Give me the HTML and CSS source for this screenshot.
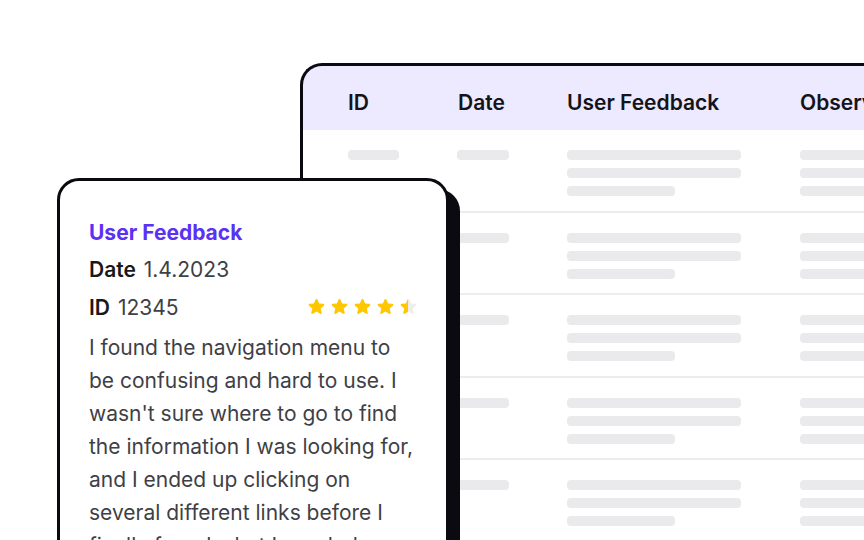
FILE: index.html
```html
<!DOCTYPE html>
<html lang="en">
<head>
<meta charset="utf-8">
<title>User Feedback</title>
<link rel="stylesheet" href="styles.css">
</head>
<body>
<div class="stage">
  <div class="table">
    <div class="thead">
      <div class="th">ID</div>
      <div class="th">Date</div>
      <div class="th">User Feedback</div>
      <div class="th">Observations</div>
    </div>
    <div class="row">
      <div class="cell"><span class="bar short"></span></div>
      <div class="cell"><span class="bar short"></span></div>
      <div class="cell"><span class="bar long"></span><span class="bar long"></span><span class="bar mid"></span></div>
      <div class="cell"><span class="bar long"></span><span class="bar long"></span><span class="bar mid"></span></div>
    </div>
    <div class="row">
      <div class="cell"><span class="bar short"></span></div>
      <div class="cell"><span class="bar short"></span></div>
      <div class="cell"><span class="bar long"></span><span class="bar long"></span><span class="bar mid"></span></div>
      <div class="cell"><span class="bar long"></span><span class="bar long"></span><span class="bar mid"></span></div>
    </div>
    <div class="row">
      <div class="cell"><span class="bar short"></span></div>
      <div class="cell"><span class="bar short"></span></div>
      <div class="cell"><span class="bar long"></span><span class="bar long"></span><span class="bar mid"></span></div>
      <div class="cell"><span class="bar long"></span><span class="bar long"></span><span class="bar mid"></span></div>
    </div>
    <div class="row">
      <div class="cell"><span class="bar short"></span></div>
      <div class="cell"><span class="bar short"></span></div>
      <div class="cell"><span class="bar long"></span><span class="bar long"></span><span class="bar mid"></span></div>
      <div class="cell"><span class="bar long"></span><span class="bar long"></span><span class="bar mid"></span></div>
    </div>
    <div class="row">
      <div class="cell"><span class="bar short"></span></div>
      <div class="cell"><span class="bar short"></span></div>
      <div class="cell"><span class="bar long"></span><span class="bar long"></span><span class="bar mid"></span></div>
      <div class="cell"><span class="bar long"></span><span class="bar long"></span><span class="bar mid"></span></div>
    </div>
  </div>

  <div class="card">
    <div class="card-title">User Feedback</div>
    <div class="meta"><span class="label">Date</span> <span class="value">1.4.2023</span></div>
    <div class="meta meta-row">
      <div><span class="label">ID</span> <span class="value">12345</span></div>
      <div class="stars">
        <svg class="star" viewBox="0 0 24 24"><path class="star-full" d="M10.788 3.21c.448-1.077 1.976-1.077 2.424 0l2.082 5.006 5.404.434c1.164.093 1.636 1.545.749 2.305l-4.117 3.527 1.257 5.273c.271 1.136-.964 2.033-1.96 1.425L12 18.354 7.373 21.18c-.996.608-2.231-.29-1.96-1.425l1.257-5.273-4.117-3.527c-.887-.76-.415-2.212.749-2.305l5.404-.434 2.082-5.005Z"/></svg>
        <svg class="star" viewBox="0 0 24 24"><path class="star-full" d="M10.788 3.21c.448-1.077 1.976-1.077 2.424 0l2.082 5.006 5.404.434c1.164.093 1.636 1.545.749 2.305l-4.117 3.527 1.257 5.273c.271 1.136-.964 2.033-1.96 1.425L12 18.354 7.373 21.18c-.996.608-2.231-.29-1.96-1.425l1.257-5.273-4.117-3.527c-.887-.76-.415-2.212.749-2.305l5.404-.434 2.082-5.005Z"/></svg>
        <svg class="star" viewBox="0 0 24 24"><path class="star-full" d="M10.788 3.21c.448-1.077 1.976-1.077 2.424 0l2.082 5.006 5.404.434c1.164.093 1.636 1.545.749 2.305l-4.117 3.527 1.257 5.273c.271 1.136-.964 2.033-1.96 1.425L12 18.354 7.373 21.18c-.996.608-2.231-.29-1.96-1.425l1.257-5.273-4.117-3.527c-.887-.76-.415-2.212.749-2.305l5.404-.434 2.082-5.005Z"/></svg>
        <svg class="star" viewBox="0 0 24 24"><path class="star-full" d="M10.788 3.21c.448-1.077 1.976-1.077 2.424 0l2.082 5.006 5.404.434c1.164.093 1.636 1.545.749 2.305l-4.117 3.527 1.257 5.273c.271 1.136-.964 2.033-1.96 1.425L12 18.354 7.373 21.18c-.996.608-2.231-.29-1.96-1.425l1.257-5.273-4.117-3.527c-.887-.76-.415-2.212.749-2.305l5.404-.434 2.082-5.005Z"/></svg>
        <svg class="star" viewBox="0 0 24 24">
          <defs>
            <linearGradient id="half" x1="0" y1="0" x2="1" y2="0">
              <stop offset="0.5" stop-color="#ffc700"/>
              <stop offset="0.5" stop-color="#eeeeef"/>
            </linearGradient>
          </defs>
          <path fill="url(#half)" d="M10.788 3.21c.448-1.077 1.976-1.077 2.424 0l2.082 5.006 5.404.434c1.164.093 1.636 1.545.749 2.305l-4.117 3.527 1.257 5.273c.271 1.136-.964 2.033-1.96 1.425L12 18.354 7.373 21.18c-.996.608-2.231-.29-1.96-1.425l1.257-5.273-4.117-3.527c-.887-.76-.415-2.212.749-2.305l5.404-.434 2.082-5.005Z"/>
        </svg>
      </div>
    </div>
    <p class="body">I found the navigation menu to be confusing and hard to use. I wasn't sure where to go to find the information I was looking for, and I ended up clicking on several different links before I finally found what I needed. Also, the search bar didn't give me relevant results.</p>
  </div>
</div>
</body>
</html>
```

FILE: styles.css
```css
* { box-sizing: border-box; }

html, body {
  margin: 0;
  padding: 0;
  background: #ffffff;
  overflow: hidden;
}

body {
  font-family: Inter, "Noto Sans", "Liberation Sans", sans-serif;
  color: #18181b;
}

.stage {
  position: relative;
  width: 864px;
  height: 540px;
  overflow: hidden;
}

/* ---------- table window ---------- */
.table {
  margin-left: 300px;
  padding-top: 63px;
  width: 700px;
}

.thead,
.row {
  display: grid;
  grid-template-columns: 110px 109px 233px 200px;
  padding-left: 45px;
}

.thead {
  background: #ede9fe;
  border: 3px solid #0a0a10;
  border-bottom: none;
  border-right: none;
  border-top-left-radius: 22px;
  height: 67px;
  padding-top: 23px;
  font-size: 21px;
  line-height: 28px;
  font-weight: 600;
  color: #141418;
  white-space: nowrap;
}

.row {
  border-left: 3px solid #0a0a10;
  border-bottom: 2px solid #ececee;
  padding-top: 20px;
  padding-bottom: 14.5px;
}

.cell {
  display: flex;
  flex-direction: column;
  gap: 8px;
}

.bar {
  display: block;
  height: 10px;
  border-radius: 4px;
  background: #eaeaec;
}

.bar.short { width: 51px; }
.cell:nth-child(2) .bar.short { width: 52px; margin-left: -1px; }
.bar.long { width: 174px; }
.bar.mid { width: 108px; }
.cell:nth-child(4) .bar { width: 200px; }

/* ---------- feedback card ---------- */
.card {
  position: absolute;
  left: 57px;
  top: 178px;
  width: 392px;
  height: 420px;
  background: #ffffff;
  border: 3px solid #0a0a10;
  border-radius: 22px;
  box-shadow: 11px 11px 0 #0a0a10;
  padding: 33px 29px 0 29px;
}

.card-title {
  font-size: 21px;
  line-height: 37px;
  font-weight: 700;
  color: #5b32f4;
}

.meta {
  font-size: 21px;
  line-height: 37px;
}

.label {
  font-weight: 600;
  color: #18181b;
  margin-right: 2px;
}

.value {
  font-weight: 400;
  color: #3f3f46;
}

.meta-row {
  display: flex;
  justify-content: space-between;
  align-items: center;
  height: 38px;
}

.stars {
  display: flex;
  gap: 4px;
  margin-right: -1px;
  margin-top: -1px;
}

.star {
  width: 19px;
  height: 19px;
  display: block;
}

.star-full { fill: #ffc700; }

.body {
  margin: 5px 0 0 0;
  font-size: 21px;
  line-height: 33px;
  color: #3f3f46;
}
```
